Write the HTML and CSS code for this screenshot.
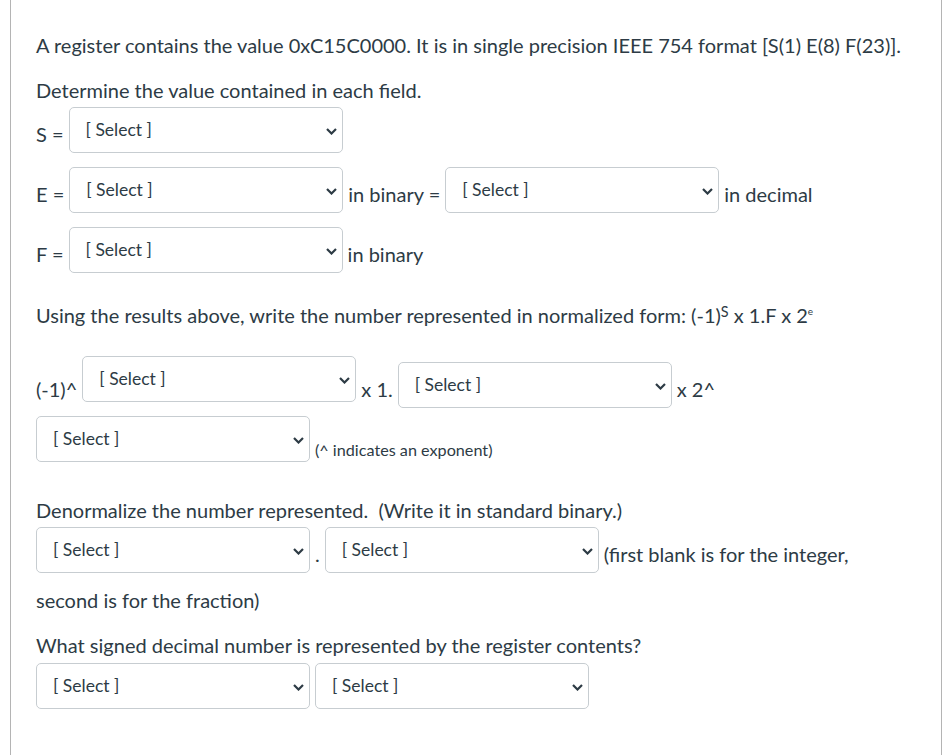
FILE: index.html
```html
<!DOCTYPE html>
<html lang="en">
<head>
    <meta charset="UTF-8">
    <meta name="viewport" content="width=device-width, initial-scale=1.0">
    <title>Quiz Question - IEEE 754</title>
    <link rel="stylesheet" href="styles.css">
</head>
<body>
    <div class="question">
        <p class="text">A register contains the value 0xC15C0000. It is in single precision IEEE 754 format [S(1) E(8) F(23)].</p>
        <p class="text next">Determine the value contained in each field.</p>

        <!-- Fields -->
        <div class="row after-text">
            <span class="label">S =</span>
            <div class="select"><span>[ Select ]</span><svg class="chevron" width="11" height="7" viewBox="0 0 11 7"><polyline points="1,1 5.5,5.5 10,1" /></svg></div>
        </div>
        <div class="row field">
            <span class="label">E =</span>
            <div class="select"><span>[ Select ]</span><svg class="chevron" width="11" height="7" viewBox="0 0 11 7"><polyline points="1,1 5.5,5.5 10,1" /></svg></div>
            <span class="label">in binary =</span>
            <div class="select"><span>[ Select ]</span><svg class="chevron" width="11" height="7" viewBox="0 0 11 7"><polyline points="1,1 5.5,5.5 10,1" /></svg></div>
            <span class="label">in decimal</span>
        </div>
        <div class="row field">
            <span class="label">F =</span>
            <div class="select"><span>[ Select ]</span><svg class="chevron" width="11" height="7" viewBox="0 0 11 7"><polyline points="1,1 5.5,5.5 10,1" /></svg></div>
            <span class="label">in binary</span>
        </div>

        <!-- Normalized form -->
        <p class="text section">Using the results above, write the number represented in normalized form: (-1)<sup>S</sup> x 1.F x 2<sup class="tiny">e</sup></p>
        <div class="row formula">
            <span class="label low">(-1)^</span>
            <div class="select"><span>[ Select ]</span><svg class="chevron" width="11" height="7" viewBox="0 0 11 7"><polyline points="1,1 5.5,5.5 10,1" /></svg></div>
            <span class="label low">x 1.</span>
            <div class="select shifted"><span>[ Select ]</span><svg class="chevron" width="11" height="7" viewBox="0 0 11 7"><polyline points="1,1 5.5,5.5 10,1" /></svg></div>
            <span class="label low">x 2^</span>
        </div>
        <div class="row exponent">
            <div class="select"><span>[ Select ]</span><svg class="chevron" width="11" height="7" viewBox="0 0 11 7"><polyline points="1,1 5.5,5.5 10,1" /></svg></div>
            <span class="note">(^ indicates an exponent)</span>
        </div>

        <!-- Denormalized -->
        <p class="text denorm">Denormalize the number represented.&nbsp; (Write it in standard binary.)</p>
        <div class="row after-text">
            <div class="select"><span>[ Select ]</span><svg class="chevron" width="11" height="7" viewBox="0 0 11 7"><polyline points="1,1 5.5,5.5 10,1" /></svg></div>
            <span class="label">.</span>
            <div class="select"><span>[ Select ]</span><svg class="chevron" width="11" height="7" viewBox="0 0 11 7"><polyline points="1,1 5.5,5.5 10,1" /></svg></div>
            <span class="label">(first blank is for the integer,</span>
        </div>
        <p class="text wrap">second is for the fraction)</p>

        <!-- Decimal value -->
        <p class="text next">What signed decimal number is represented by the register contents?</p>
        <div class="row after-text last">
            <div class="select"><span>[ Select ]</span><svg class="chevron" width="11" height="7" viewBox="0 0 11 7"><polyline points="1,1 5.5,5.5 10,1" /></svg></div>
            <div class="select"><span>[ Select ]</span><svg class="chevron" width="11" height="7" viewBox="0 0 11 7"><polyline points="1,1 5.5,5.5 10,1" /></svg></div>
        </div>
    </div>
</body>
</html>
```

FILE: styles.css
```css
/* Page */
body {
    margin: 0;
    font-family: Lato, "Open Sans", sans-serif;
    font-size: 20px;
    color: #2d3b45;
    background: #fff;
}

/* Question box */
.question {
    margin-left: 10px;
    width: 932px;
    min-height: 755px;
    box-sizing: border-box;
    padding: 31px 25px 40px;
    border-left: 1px solid #b4b4b4;
    border-right: 1px solid #b4b4b4;
}

/* Text lines */
.text {
    margin: 0;
    line-height: 28px;
}

.text.next {
    margin-top: 17px;
}

.text.section {
    margin-top: 28px;
}

.text.denorm {
    margin-top: 34px;
}

.text.wrap {
    margin-top: 13px;
}

sup {
    font-size: 0.72em;
    line-height: 0;
    vertical-align: 0.45em;
}

sup.tiny {
    font-size: 0.5em;
    vertical-align: 0.8em;
}

/* Rows of dropdowns */
.row {
    display: flex;
    align-items: flex-start;
    gap: 5px;
}

.row.after-text {
    margin-top: 3px;
}

.row.field {
    margin-top: 14px;
}

.row.formula {
    margin-top: 27px;
}

.row.exponent {
    margin-top: 8px;
}

.row.last {
    margin-top: 4px;
}

.label {
    line-height: 28px;
    padding-top: 13px;
    white-space: nowrap;
}

.label.low {
    padding-top: 19px;
}

.note {
    font-size: 16.2px;
    line-height: 20px;
    padding-top: 24px;
}

/* Dropdown look */
.select {
    width: 274px;
    height: 46px;
    box-sizing: border-box;
    flex-shrink: 0;
    display: flex;
    align-items: center;
    justify-content: space-between;
    padding: 0 5px 0 16px;
    border: 1px solid #c7cdd1;
    border-radius: 5px;
    background: #fff;
    font-size: 17.5px;
    line-height: 22px;
}

.select.shifted {
    margin-top: 6px;
}

.chevron {
    fill: none;
    stroke: #2d3b45;
    stroke-width: 2.2;
    margin-top: 2px;
}
```
